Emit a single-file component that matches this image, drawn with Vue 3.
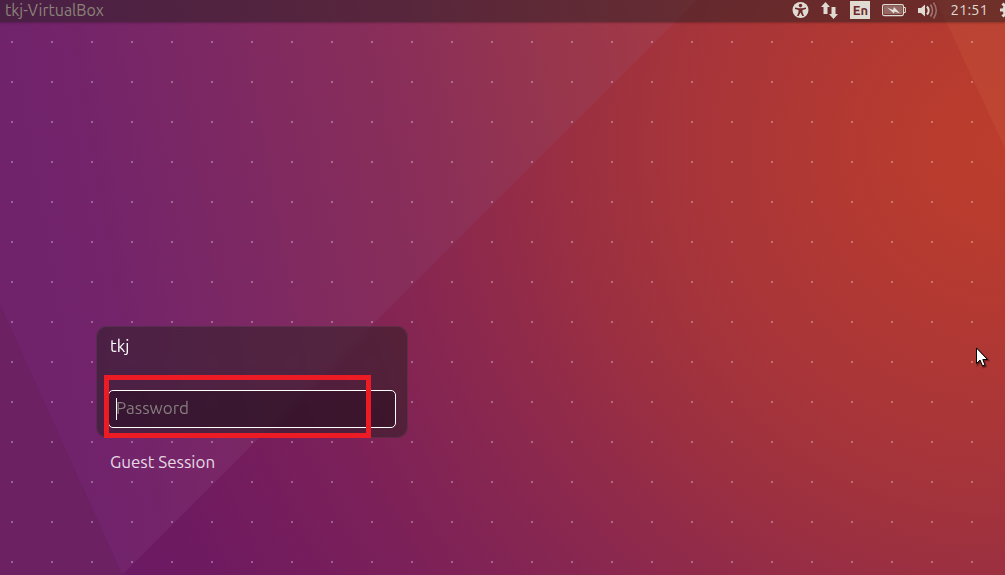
<script setup>
import { ref } from 'vue'

const hostname = 'tkj-VirtualBox'
const clock = '21:51'
const user = 'tkj'
const password = ref('')
</script>

<template>
  <div class="greeter">
    <svg class="wallpaper" viewBox="0 0 1005 575" preserveAspectRatio="none" aria-hidden="true">
      <defs>
        <radialGradient id="glow" gradientUnits="userSpaceOnUse" cx="1005" cy="150" r="1010">
          <stop offset="0" stop-color="#bc3d2c" />
          <stop offset="0.1" stop-color="#b73b2f" />
          <stop offset="0.2" stop-color="#b03834" />
          <stop offset="0.3" stop-color="#a83539" />
          <stop offset="0.4" stop-color="#9e313f" />
          <stop offset="0.5" stop-color="#922b49" />
          <stop offset="0.6" stop-color="#862651" />
          <stop offset="0.72" stop-color="#7b2059" />
          <stop offset="0.9" stop-color="#6e1a61" />
          <stop offset="1" stop-color="#6a1a64" />
        </radialGradient>
        <linearGradient id="band" gradientUnits="userSpaceOnUse" x1="0" y1="60" x2="670" y2="-60">
          <stop offset="0" stop-color="#70226b" />
          <stop offset="0.1" stop-color="#73246a" />
          <stop offset="0.3" stop-color="#7c2863" />
          <stop offset="0.6" stop-color="#8b2f58" />
          <stop offset="0.8" stop-color="#98364d" />
          <stop offset="1" stop-color="#a43a45" />
        </linearGradient>
      </defs>
      <rect width="1005" height="575" fill="url(#glow)" />
      <path d="M0 0H697L122 575L0 305Z" fill="url(#band)" />
      <path d="M0 305L122 575H0Z" fill="#6b2162" />
      <path d="M936 0H1005V148Z" fill="#d06a48" fill-opacity="0.2" />
    </svg>
    <div class="dots"></div>

    <header class="bar">
      <span class="host">{{ hostname }}</span>
      <nav class="indicators" aria-label="Indicators">
        <button type="button" aria-label="Accessibility">
          <svg width="17" height="18" viewBox="0 0 17 18">
            <circle cx="8.5" cy="9" r="8" fill="#dfdbd2" />
            <circle cx="8.5" cy="4.6" r="1.8" fill="#70292b" />
            <path d="M3 6.500L7 7.200H10L14 6.500V8L10.500 9V11L12 15H10.300L8.500 11.500L6.700 15H5L6.500 11V9L3 8Z" fill="#70292b" />
          </svg>
        </button>
        <button type="button" aria-label="Network">
          <svg width="17" height="18" viewBox="0 0 17 18">
            <path d="M4.500 1L9 6H6.500V13H2.500V6H0Z" fill="#dfdbd2" />
            <path d="M10.500 6H14.500V13H17L12.500 18L8 13H10.500Z" fill="#dfdbd2" />
          </svg>
        </button>
        <button type="button" class="lang" aria-label="Keyboard layout: English">En</button>
        <button type="button" aria-label="Battery">
          <svg width="24" height="18" viewBox="0 0 24 18">
            <rect x="0.600" y="3.600" width="20.800" height="11" rx="1.500" fill="none" stroke="#dfdbd2" stroke-width="1.200" />
            <rect x="2" y="5" width="18" height="8.200" fill="#dfdbd2" fill-opacity="0.35" />
            <path d="M22 6.500h1.400v5H22" fill="none" stroke="#dfdbd2" />
            <path d="M5 6.500L11 9L12 6L18 12.500L12.500 10.500L12 12.500Z" fill="#e8e3da" />
          </svg>
        </button>
        <button type="button" aria-label="Sound">
          <svg width="20" height="18" viewBox="0 0 20 18" fill="none" stroke="#dfdbd2" stroke-width="1.500">
            <path d="M0 7H3L7 3.500V15.500L3 12H0Z" fill="#dfdbd2" stroke="none" />
            <path d="M9 5.500Q12.500 9.500 9 13.500" stroke-width="2" />
            <path d="M12.500 3.500Q16.500 9.500 12.500 15.500" stroke-opacity="0.45" />
            <path d="M15.500 1.500Q21 9.500 15.500 17.500" stroke-opacity="0.4" />
          </svg>
        </button>
        <button type="button" class="clock">{{ clock }}</button>
        <button type="button" class="gear" aria-label="System">
          <svg width="18" height="18" viewBox="0 0 18 18" fill="none" stroke="#dfdbd2">
            <circle cx="9" cy="9" r="5" stroke-width="3" />
            <path d="M9 1V4M9 14V17M0 9H4M14 9H18M2.500 2.500L5.500 5.500M12.500 12.500L15.500 15.500M2.500 15.500L5.500 12.500M12.500 5.500L15.500 2.500" stroke-width="3" />
          </svg>
        </button>
      </nav>
    </header>

    <main class="users">
      <form class="prompt" @submit.prevent>
        <label class="name" for="password">{{ user }}</label>
        <div class="entry">
          <input id="password" v-model="password" type="password" placeholder="Password" />
          <span class="caret"></span>
        </div>
        <div class="highlight"></div>
      </form>
      <button type="button" class="guest">Guest Session</button>
    </main>

    <svg class="pointer" width="14" height="22" viewBox="0 0 14 22" aria-hidden="true">
      <path d="M1.500 2.500V18L5 14.500L7.500 20.500L10 19.500L7.800 13.500H12.500Z" fill="#000" fill-opacity="0.3" stroke="#000" stroke-opacity="0.25" stroke-width="2" />
      <path d="M0.500 1V16.500L4 13L6.500 19L9 18L6.800 12.500H11.500Z" fill="#fff" stroke="#000" />
    </svg>
  </div>
</template>

<style>
body {
  margin: 0;
}
</style>

<style scoped>
.greeter {
  position: relative;
  min-height: 100vh;
  overflow: hidden;
  font-family: Ubuntu, "Noto Sans", sans-serif;
  color: #fff;
}

.wallpaper,
.dots {
  position: absolute;
  inset: 0;
  width: 100%;
  height: 100%;
}

.dots {
  top: 22px;
  background-image: conic-gradient(from 90deg at 38px 38px, rgba(255, 255, 255, 0.3) 90deg, transparent 0);
  background-size: 40px 40px;
  background-position: 13px 21px;
}

button {
  padding: 0;
  border: 0;
  background: none;
  font: inherit;
  color: inherit;
}

.bar {
  position: relative;
  display: flex;
  justify-content: space-between;
  height: 22px;
  padding-left: 5px;
  background: rgba(38, 29, 32, 0.5);
  box-shadow: 0 1px 2px rgba(0, 0, 0, 0.25);
  font-size: 15px;
  line-height: 20px;
}

.host {
  color: #8b8378;
  font-size: 16px;
}

.indicators {
  display: flex;
  align-items: flex-start;
  gap: 12px;
  height: 20px;
  color: #dfdbd2;
}

.indicators svg {
  display: block;
  margin-top: 1px;
}

.indicators .lang {
  width: 20px;
  height: 18px;
  margin-top: 1px;
  background: #dfdbd2;
  color: #70292b;
  font-size: 13px;
  font-weight: 700;
  line-height: 19px;
}

.gear {
  margin-right: -13px;
}

.users {
  position: relative;
  width: 312px;
  margin: 304px 0 0 96px;
}

.prompt {
  position: relative;
  box-sizing: border-box;
  height: 112px;
  padding: 8px 12px 10px;
  border: 1px solid rgba(255, 255, 255, 0.06);
  border-radius: 11px;
  background: rgba(38, 29, 32, 0.5);
  backdrop-filter: blur(4px);
  font-size: 17px;
}

.name {
  display: block;
  height: 55px;
  padding-left: 1px;
  line-height: 22px;
}

.entry {
  position: relative;
  margin: 0 -1px;
}

input {
  display: block;
  box-sizing: border-box;
  width: 100%;
  height: 38px;
  padding: 0 7px 3px;
  border: 1px solid #fff;
  border-radius: 5px;
  outline: none;
  background: rgba(10, 0, 10, 0.3);
  color: #fff;
  font: inherit;
}

input::placeholder {
  color: #877d7e;
  opacity: 1;
}

.caret {
  position: absolute;
  top: 8px;
  left: 8px;
  width: 1px;
  height: 22px;
  background: #fff;
}

.highlight {
  position: absolute;
  top: 48px;
  left: 7px;
  box-sizing: border-box;
  width: 267px;
  height: 63px;
  border: 5px solid #ed1c24;
  pointer-events: none;
}

.guest {
  display: block;
  margin: 13px 0 0 14px;
  color: #e6d8e4;
  font-size: 17px;
  line-height: 22px;
}

.pointer {
  position: absolute;
  top: 347px;
  left: 976px;
}
</style>
